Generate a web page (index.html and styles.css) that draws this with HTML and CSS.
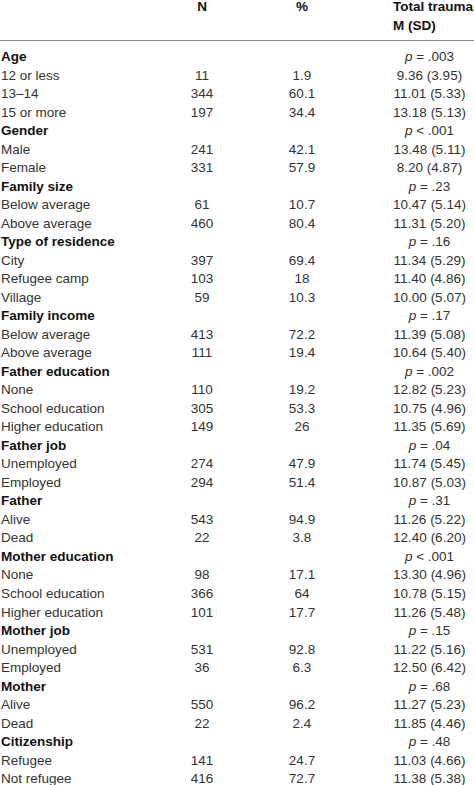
FILE: index.html
```html
<!DOCTYPE html>
<html lang="en">
<head>
<meta charset="utf-8">
<title>Trauma table</title>
<link rel="stylesheet" href="styles.css">
</head>
<body>
<table class="stats">
  <colgroup>
    <col class="c-label"><col class="c-n"><col class="c-pct"><col class="c-m">
  </colgroup>
  <thead>
    <tr><th></th><th>N</th><th>%</th><th class="h-m">Total trauma<br>M (SD)</th></tr>
  </thead>
  <tbody>
    <tr class="grp first"><td>Age</td><td></td><td></td><td class="m"><i>p</i> = .003</td></tr>
    <tr><td>12 or less</td><td>11</td><td>1.9</td><td class="m">9.36 (3.95)</td></tr>
    <tr><td>13–14</td><td>344</td><td>60.1</td><td class="m">11.01 (5.33)</td></tr>
    <tr><td>15 or more</td><td>197</td><td>34.4</td><td class="m">13.18 (5.13)</td></tr>
    <tr class="grp"><td>Gender</td><td></td><td></td><td class="m"><i>p</i> &lt; .001</td></tr>
    <tr><td>Male</td><td>241</td><td>42.1</td><td class="m">13.48 (5.11)</td></tr>
    <tr><td>Female</td><td>331</td><td>57.9</td><td class="m">8.20 (4.87)</td></tr>
    <tr class="grp"><td>Family size</td><td></td><td></td><td class="m"><i>p</i> = .23</td></tr>
    <tr><td>Below average</td><td>61</td><td>10.7</td><td class="m">10.47 (5.14)</td></tr>
    <tr><td>Above average</td><td>460</td><td>80.4</td><td class="m">11.31 (5.20)</td></tr>
    <tr class="grp"><td>Type of residence</td><td></td><td></td><td class="m"><i>p</i> = .16</td></tr>
    <tr><td>City</td><td>397</td><td>69.4</td><td class="m">11.34 (5.29)</td></tr>
    <tr><td>Refugee camp</td><td>103</td><td>18</td><td class="m">11.40 (4.86)</td></tr>
    <tr><td>Village</td><td>59</td><td>10.3</td><td class="m">10.00 (5.07)</td></tr>
    <tr class="grp"><td>Family income</td><td></td><td></td><td class="m"><i>p</i> = .17</td></tr>
    <tr><td>Below average</td><td>413</td><td>72.2</td><td class="m">11.39 (5.08)</td></tr>
    <tr><td>Above average</td><td>111</td><td>19.4</td><td class="m">10.64 (5.40)</td></tr>
    <tr class="grp"><td>Father education</td><td></td><td></td><td class="m"><i>p</i> = .002</td></tr>
    <tr><td>None</td><td>110</td><td>19.2</td><td class="m">12.82 (5.23)</td></tr>
    <tr><td>School education</td><td>305</td><td>53.3</td><td class="m">10.75 (4.96)</td></tr>
    <tr><td>Higher education</td><td>149</td><td>26</td><td class="m">11.35 (5.69)</td></tr>
    <tr class="grp"><td>Father job</td><td></td><td></td><td class="m"><i>p</i> = .04</td></tr>
    <tr><td>Unemployed</td><td>274</td><td>47.9</td><td class="m">11.74 (5.45)</td></tr>
    <tr><td>Employed</td><td>294</td><td>51.4</td><td class="m">10.87 (5.03)</td></tr>
    <tr class="grp"><td>Father</td><td></td><td></td><td class="m"><i>p</i> = .31</td></tr>
    <tr><td>Alive</td><td>543</td><td>94.9</td><td class="m">11.26 (5.22)</td></tr>
    <tr><td>Dead</td><td>22</td><td>3.8</td><td class="m">12.40 (6.20)</td></tr>
    <tr class="grp"><td>Mother education</td><td></td><td></td><td class="m"><i>p</i> &lt; .001</td></tr>
    <tr><td>None</td><td>98</td><td>17.1</td><td class="m">13.30 (4.96)</td></tr>
    <tr><td>School education</td><td>366</td><td>64</td><td class="m">10.78 (5.15)</td></tr>
    <tr><td>Higher education</td><td>101</td><td>17.7</td><td class="m">11.26 (5.48)</td></tr>
    <tr class="grp"><td>Mother job</td><td></td><td></td><td class="m"><i>p</i> = .15</td></tr>
    <tr><td>Unemployed</td><td>531</td><td>92.8</td><td class="m">11.22 (5.16)</td></tr>
    <tr><td>Employed</td><td>36</td><td>6.3</td><td class="m">12.50 (6.42)</td></tr>
    <tr class="grp"><td>Mother</td><td></td><td></td><td class="m"><i>p</i> = .68</td></tr>
    <tr><td>Alive</td><td>550</td><td>96.2</td><td class="m">11.27 (5.23)</td></tr>
    <tr><td>Dead</td><td>22</td><td>2.4</td><td class="m">11.85 (4.46)</td></tr>
    <tr class="grp"><td>Citizenship</td><td></td><td></td><td class="m"><i>p</i> = .48</td></tr>
    <tr><td>Refugee</td><td>141</td><td>24.7</td><td class="m">11.03 (4.66)</td></tr>
    <tr><td>Not refugee</td><td>416</td><td>72.7</td><td class="m">11.38 (5.38)</td></tr>
  </tbody>
</table>
</body>
</html>
```
FILE: styles.css
```css
html, body {
  margin: 0;
  padding: 0;
  background: #fff;
  overflow: hidden;
}
body {
  width: 474px;
  height: 785px;
  font-family: "Liberation Sans", Arial, Helvetica, sans-serif;
  font-size: 13.5px;
  color: #333;
}
.stats {
  table-layout: fixed;
  border-collapse: collapse;
  width: 474px;
  margin-top: -2px;
}
.c-label { width: 152px; }
.c-n { width: 100px; }
.c-pct { width: 100px; }
.c-m { width: 122px; }
.stats th, .stats td {
  padding: 0;
  line-height: 18.52px;
  white-space: nowrap;
  vertical-align: top;
}
.stats th {
  font-weight: bold;
  color: #111;
  text-align: center;
  padding-bottom: 5px;
  border-bottom: 1px solid #8c8c8c;
}
.stats th.h-m {
  text-align: left;
  padding-left: 41px;
}
.stats td {
  text-align: center;
}
.stats td:first-child {
  text-align: left;
  padding-left: 1px;
}
.stats td.m {
  padding-left: 33px;
}
.stats tr.first td {
  padding-top: 7px;
}
.stats tr.grp td:first-child {
  font-weight: bold;
  color: #111;
}
.stats i {
  font-style: italic;
}
```
